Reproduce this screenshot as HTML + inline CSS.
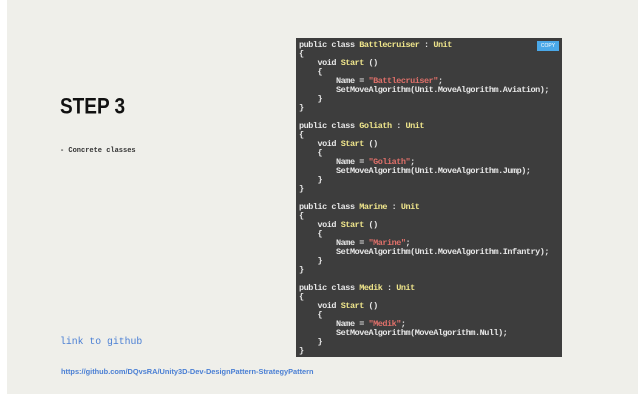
<!DOCTYPE html>
<html><head><style>
body{margin:0;width:638px;height:403px;background:#fff;position:relative;overflow:hidden}
.slide{position:absolute;left:7px;top:0;width:631px;height:394px;background:#efefea}
.h{position:absolute;left:60px;top:95px;font:bold 20px "Liberation Sans",sans-serif;color:#111;transform:scale(0.95,1.1);transform-origin:0 0;letter-spacing:0}
.sub{position:absolute;left:60px;top:147px;font:bold 7px "Liberation Mono",monospace;color:#333}
.link{position:absolute;left:60px;top:336px;font:9.8px "Liberation Mono",monospace;color:#4a7fd4}
.url{position:absolute;left:61px;top:367px;font:bold 7.4px "Liberation Sans",sans-serif;color:#4a7fd4}
.code{position:absolute;left:296px;top:38px;width:266px;height:319px;background:#3d3d3d}
pre{margin:0;position:absolute;left:3px;top:3px;font:bold 8.5px/9px "Liberation Mono",monospace;letter-spacing:-0.47px;color:#e8e8e8}
.k{color:#f0e68c}.s{color:#e0706a}
.copy{position:absolute;left:241px;top:3px;width:22px;height:10px;background:#4aa8e8;color:#fff;font:5px "Liberation Sans",sans-serif;text-align:center;line-height:10px}
</style></head><body>
<div class="slide"></div>
<div class="h">STEP 3</div>
<div class="sub">- Concrete classes</div>
<div class="link">link to github</div>
<div class="url">https://github.com/DQvsRA/Unity3D-Dev-DesignPattern-StrategyPattern</div>
<div class="code"><div class="copy">COPY</div><pre>public class <span class="k">Battlecruiser</span> : <span class="k">Unit</span>
{
    void <span class="k">Start</span> ()
    {
        Name = <span class="s">"Battlecruiser"</span>;
        SetMoveAlgorithm(Unit.MoveAlgorithm.Aviation);
    }
}

public class <span class="k">Goliath</span> : <span class="k">Unit</span>
{
    void <span class="k">Start</span> ()
    {
        Name = <span class="s">"Goliath"</span>;
        SetMoveAlgorithm(Unit.MoveAlgorithm.Jump);
    }
}

public class <span class="k">Marine</span> : <span class="k">Unit</span>
{
    void <span class="k">Start</span> ()
    {
        Name = <span class="s">"Marine"</span>;
        SetMoveAlgorithm(Unit.MoveAlgorithm.Infantry);
    }
}

public class <span class="k">Medik</span> : <span class="k">Unit</span>
{
    void <span class="k">Start</span> ()
    {
        Name = <span class="s">"Medik"</span>;
        SetMoveAlgorithm(MoveAlgorithm.Null);
    }
}</pre></div>
</body></html>
